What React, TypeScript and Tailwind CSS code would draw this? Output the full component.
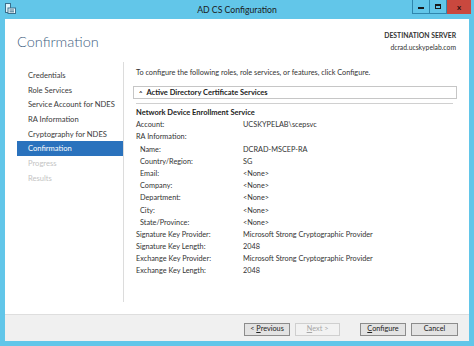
import React from "react";

const rows: [string, string, boolean][] = [
  ["Account:", "UCSKYPELAB\\scepsvc", false],
  ["RA Information:", "", false],
  ["Name:", "DCRAD-MSCEP-RA", true],
  ["Country/Region:", "SG", true],
  ["Email:", "<None>", true],
  ["Company:", "<None>", true],
  ["Department:", "<None>", true],
  ["City:", "<None>", true],
  ["State/Province:", "<None>", true],
  ["Signature Key Provider:", "Microsoft Strong Cryptographic Provider", false],
  ["Signature Key Length:", "2048", false],
  ["Exchange Key Provider:", "Microsoft Strong Cryptographic Provider", false],
  ["Exchange Key Length:", "2048", false],
];

const nav: [string, "normal" | "active" | "disabled"][] = [
  ["Credentials", "normal"],
  ["Role Services", "normal"],
  ["Service Account for NDES", "normal"],
  ["RA Information", "normal"],
  ["Cryptography for NDES", "normal"],
  ["Confirmation", "active"],
  ["Progress", "disabled"],
  ["Results", "disabled"],
];

export default function App() {
  return (
    <div className="w-[474px] h-[346px] bg-[#62c6e9] flex flex-col font-['Lato','Liberation_Sans',sans-serif] text-[#333] overflow-hidden">
      {/* Title bar */}
      <div className="h-[19px] grid grid-cols-[1fr_auto_1fr] items-start">
        <div className="pl-[5px] pt-[3px]">
          <svg width="11" height="11" viewBox="0 0 11 11">
            <rect x="0.5" y="0.5" width="5" height="9" fill="#dff3fb" stroke="#3b6f8c" />
            <rect x="3" y="5" width="7.5" height="5.5" fill="#eef8fc" stroke="#3b6f8c" />
            <line x1="4.5" y1="7" x2="9" y2="7" stroke="#3b6f8c" />
            <line x1="4.5" y1="8.8" x2="9" y2="8.8" stroke="#3b6f8c" />
          </svg>
        </div>
        <div className="text-[8.7px] leading-[19px] text-[#1b1b1b]">AD CS Configuration</div>
        <div className="flex justify-end pr-[3px]">
          <div className="flex h-[14px] border border-t-0 border-[#2f86ad]">
            <div className="w-[17px] flex items-end justify-center pb-[4px] border-r border-[#2f86ad]">
              <div className="w-[6px] h-[2px] bg-[#1a1a1a]" />
            </div>
            <div className="w-[16px] flex items-center justify-center">
              <div className="w-[6px] h-[5px] border border-t-2 border-[#1a1a1a]" />
            </div>
          </div>
          <div className="w-[24px] h-[14px] bg-[#c9483e] flex items-center justify-center text-[8px] font-bold text-[#2b1010] leading-none">
            x
          </div>
        </div>
      </div>

      {/* Client area */}
      <div className="mx-[5px] mb-[5px] flex-1 bg-white flex flex-col">
        {/* Header */}
        <div className="h-[41px] flex justify-between pl-[12px] pr-[13px]">
          <div className="pt-[16px] text-[14.5px] font-light text-[#3f6282] leading-none">Confirmation</div>
          <div className="pt-[10px] text-right">
            <div className="text-[6.8px] font-bold text-[#333] leading-[12px]">DESTINATION SERVER</div>
            <div className="text-[6.8px] text-[#333] leading-[12px]">dcrad.ucskypelab.com</div>
          </div>
        </div>

        {/* Body */}
        <div className="flex-1 flex pb-[12px]">
          <div className="w-[118px] pl-[12px] pt-[8px] shrink-0">
            {nav.map(([t, s]) => (
              <div
                key={t}
                className={
                  s === "active"
                    ? "h-[14.7px] leading-[14.7px] pl-[11px] text-[7.6px] bg-[#2a72bd] text-white"
                    : s === "disabled"
                    ? "h-[14.7px] leading-[14.7px] pl-[11px] text-[7.6px] text-[#c4c4c4]"
                    : "h-[14.7px] leading-[14.7px] pl-[11px] text-[7.6px] text-[#3a3a3a]"
                }
              >
                {t}
              </div>
            ))}
          </div>
          <div className="flex-1 border-l border-[#dcdcdc] mt-[2px] pl-[12px] pr-[12px] pt-[5px]">
            <div className="h-[12px] leading-[12px] text-[7.3px]">
              To configure the following roles, role services, or features, click Configure.
            </div>
            <div className="mt-[7px] -ml-[3px] h-[13px] border border-[#c6c6c6] flex items-center pl-[5px] text-[7.5px] font-bold text-[#222]">
              <span className="text-[6px] mr-[4px]">^</span>
              <span>Active Directory Certificate Services</span>
            </div>
            <div className="mt-[4px] mr-[4px] h-px bg-[#d0d0d0]" />
            <div className="mt-[3px]">
              <div className="h-[12.2px] leading-[12.2px] text-[7.5px] font-bold text-[#222]">
                Network Device Enrollment Service
              </div>
              {rows.map(([l, v, indent]) => (
                <div key={l} className="grid grid-cols-[107px_1fr] h-[12.2px] leading-[12.2px] text-[7.3px]">
                  <div className={indent ? "pl-[4px]" : ""}>{l}</div>
                  <div>{v}</div>
                </div>
              ))}
            </div>
          </div>
        </div>

        {/* Footer */}
        <div className="h-[27px] border-t border-[#dedede] bg-[#f0f0f0] flex justify-end items-start pt-[8px] pr-[11px] text-[7.3px]">
          <div className="w-[46px] h-[13px] border border-[#8c8c8c] bg-[#e3e3e3] flex items-center justify-center text-[#222]">
            &lt;&nbsp;<span className="underline">P</span>revious
          </div>
          <div className="ml-[5px] w-[45px] h-[13px] border border-[#cfcfcf] bg-[#f2f2f2] flex items-center justify-center text-[#a8a8a8]">
            <span className="underline">N</span>ext &gt;
          </div>
          <div className="ml-[20px] w-[46px] h-[13px] border border-[#8c8c8c] bg-[#e3e3e3] flex items-center justify-center text-[#222]">
            <span className="underline">C</span>onfigure
          </div>
          <div className="ml-[5px] w-[47px] h-[13px] border border-[#8c8c8c] bg-[#e3e3e3] flex items-center justify-center text-[#222]">
            Cancel
          </div>
        </div>
      </div>
    </div>
  );
}
